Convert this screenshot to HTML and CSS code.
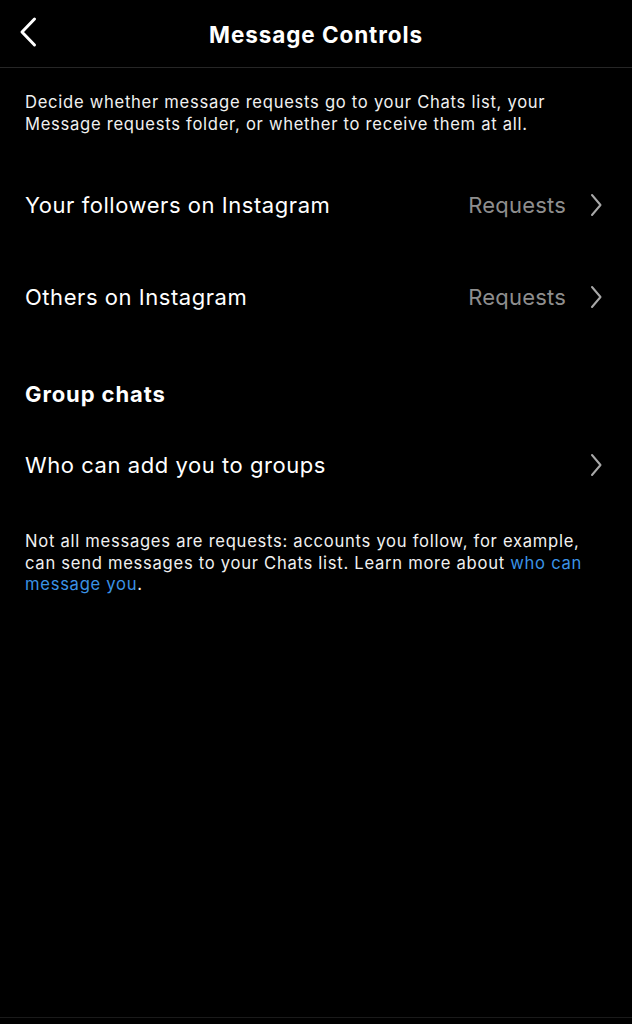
FILE: index.html
```html
<!DOCTYPE html>
<html lang="en">
<head>
  <meta charset="UTF-8">
  <title>Message Controls</title>
  <link rel="stylesheet" href="styles.css">
</head>
<body>
  <div class="topbar">
    <button class="back" aria-label="Back">
      <svg width="24" height="34" viewBox="0 0 24 34"><path d="M17.5 3 L5 16 L17.5 29" fill="none" stroke="#fff" stroke-width="3" stroke-linecap="round" stroke-linejoin="round"/></svg>
    </button>
    <div class="title">Message Controls</div>
  </div>

  <p class="note top">Decide whether message requests go to your Chats list, your Message requests folder, or whether to receive them at all.</p>

  <div class="row">
    <span class="label">Your followers on Instagram</span>
    <span class="value">Requests</span>
    <svg class="chev" width="14" height="24" viewBox="0 0 14 24"><path d="M3 2 L11.5 12 L3 22" fill="none" stroke="#a8a8a8" stroke-width="2" stroke-linecap="round" stroke-linejoin="round"/></svg>
  </div>
  <div class="row">
    <span class="label">Others on Instagram</span>
    <span class="value">Requests</span>
    <svg class="chev" width="14" height="24" viewBox="0 0 14 24"><path d="M3 2 L11.5 12 L3 22" fill="none" stroke="#a8a8a8" stroke-width="2" stroke-linecap="round" stroke-linejoin="round"/></svg>
  </div>

  <div class="section">Group chats</div>
  <div class="row">
    <span class="label">Who can add you to groups</span>
    <svg class="chev" width="14" height="24" viewBox="0 0 14 24"><path d="M3 2 L11.5 12 L3 22" fill="none" stroke="#a8a8a8" stroke-width="2" stroke-linecap="round" stroke-linejoin="round"/></svg>
  </div>

  <p class="note bottom">Not all messages are requests: accounts you follow, for example, can send messages to your Chats list. Learn more about <a href="#">who can message you</a>.</p>

  <div class="homebar"></div>
</body>
</html>
```

FILE: styles.css
```css
html, body {
  margin: 0;
  padding: 0;
  height: 100%;
}
body {
  background: #000;
  color: #fff;
  font-family: Inter, "Noto Sans", sans-serif;
  display: flex;
  flex-direction: column;
}
.topbar {
  height: 67px;
  border-bottom: 1px solid #262626;
  display: flex;
  align-items: center;
  justify-content: center;
  position: relative;
}
.back {
  position: absolute;
  left: 17px;
  top: 16px;
  background: none;
  border: 0;
  padding: 0;
}
.back svg {
  display: block;
}
.title {
  font-size: 22.5px;
  font-weight: 700;
  letter-spacing: 0.9px;
  margin-top: 1px;
}
.note {
  margin: 0;
  padding: 0 25px;
  font-size: 16.6px;
  line-height: 22px;
  letter-spacing: 0.72px;
  color: #f0f0f0;
}
.note.top {
  padding-top: 23px;
  padding-bottom: 24px;
}
.note.bottom {
  padding-top: 20px;
  padding-right: 30px;
  line-height: 21.5px;
}
.note a {
  color: #3b93e6;
  text-decoration: none;
}
.row {
  height: 92px;
  display: flex;
  align-items: center;
  padding: 0 29px 0 25px;
  font-size: 22px;
  letter-spacing: 0.55px;
}
.label {
  flex: 1;
}
.value {
  color: #8e8e8e;
  letter-spacing: 0.2px;
  margin-right: 23px;
}
.chev {
  display: block;
}
.section {
  font-size: 22px;
  font-weight: 700;
  letter-spacing: 0.9px;
  padding: 38px 25px 0;
  height: 38px;
}
.homebar {
  margin-top: auto;
  height: 6px;
  border-top: 1px solid #1a1a1a;
}
```
